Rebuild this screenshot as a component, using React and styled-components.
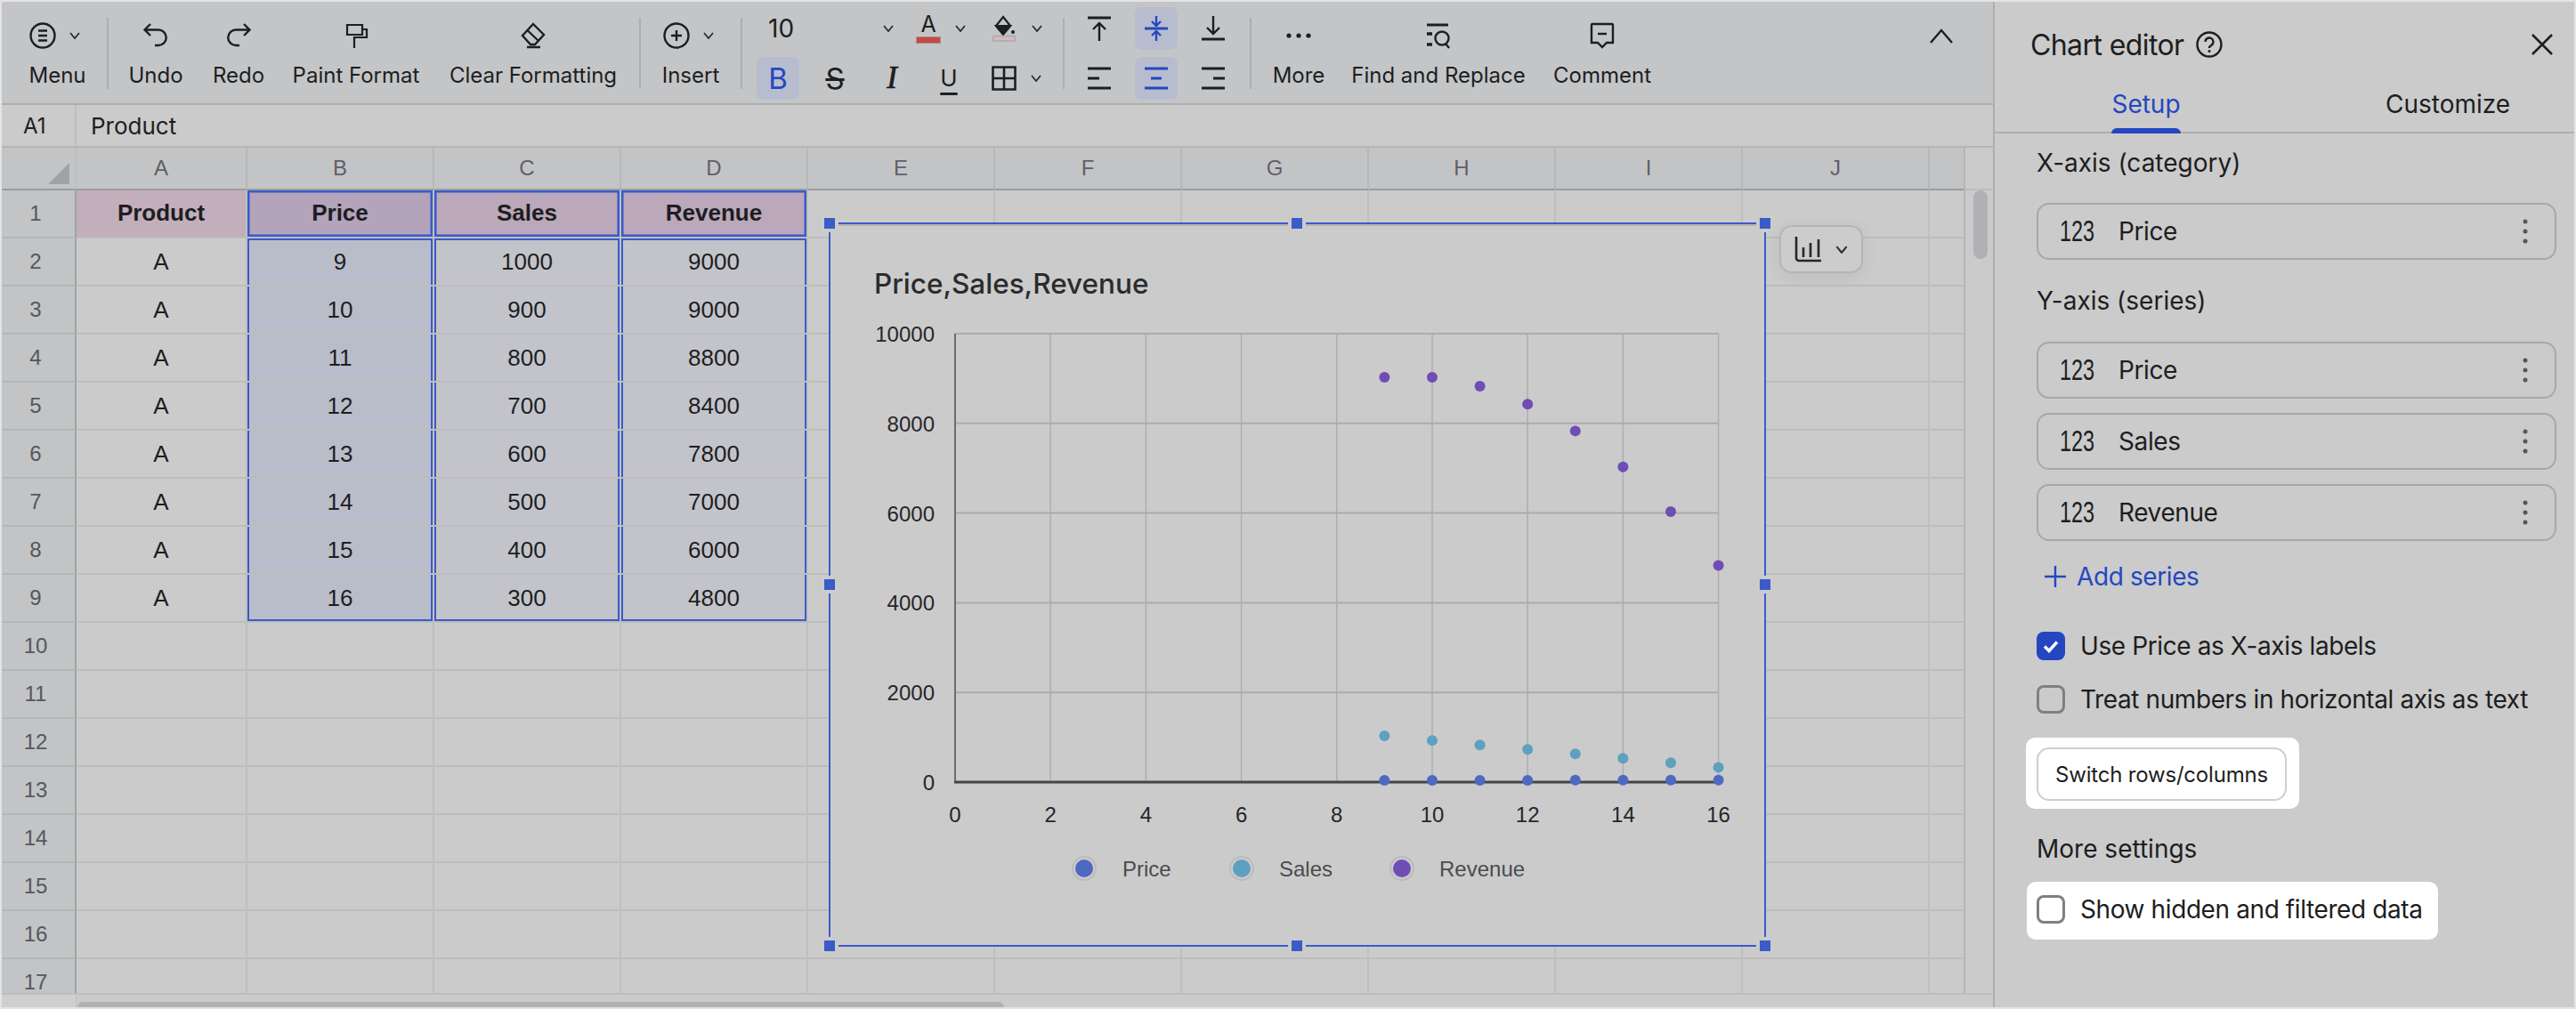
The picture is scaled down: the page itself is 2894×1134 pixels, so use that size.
import React from "react";
import styled, { createGlobalStyle } from "styled-components";

const INK = "#1d1e21";
const BLUE = "#2447c0";
const LINE = "#3a5bc8";
const SANS = `Inter, "Liberation Sans", sans-serif`;
const ARIAL = `"Liberation Sans", Arial, sans-serif`;

const GlobalStyle = createGlobalStyle`
  html, body { margin: 0; padding: 0; background: #e4e4e4; }
  * { box-sizing: border-box; }
`;

const Page = styled.div`
  width: 2894px;
  height: 1134px;
  padding: 2px;
  display: flex;
  background: #e4e4e4;
  color: ${INK};
  font-family: ${SANS};
  overflow: hidden;
`;

const Workspace = styled.div`
  width: 2237px;
  display: flex;
  flex-direction: column;
`;

/* toolbar */
const Toolbar = styled.div`
  height: 116px;
  display: flex;
  align-items: flex-start;
  background: #c4c5c7;
  border-bottom: 2px solid #adaeb0;
`;

const TallButton = styled.div`
  width: ${(p) => p.$w}px;
  padding-top: 23px;
  padding-left: ${(p) => p.$pl || 0}px;
  display: flex;
  flex-direction: column;
  align-items: center;
  gap: 15px;
  flex: none;
`;

const IconRow = styled.div`
  height: 30px;
  display: flex;
  align-items: center;
  gap: 15px;
  margin-right: ${(p) => p.$mr || 0}px;
`;

const ToolLabel = styled.span`
  font-size: 24px;
  line-height: 30px;
  white-space: nowrap;
`;

const Sep = styled.div`
  width: 2px;
  height: 80px;
  margin: 18px ${(p) => p.$mr || 0}px 0 ${(p) => p.$ml || 0}px;
  background: #adaeb0;
  flex: none;
`;

const MiniBlock = styled.div`
  width: ${(p) => p.$w}px;
  padding-top: 6px;
  display: flex;
  flex-direction: column;
  gap: 8px;
  flex: none;
`;

const MiniRow = styled.div`
  height: 48px;
  display: flex;
  align-items: center;
  gap: ${(p) => p.$gap || 0}px;
  padding-left: ${(p) => p.$pl || 0}px;
`;

const Square = styled.div`
  width: 48px;
  height: 48px;
  border-radius: 8px;
  display: flex;
  align-items: center;
  justify-content: center;
  background: ${(p) => (p.$on ? "#b7bdce" : "transparent")};
  color: ${(p) => (p.$on ? BLUE : INK)};
  flex: none;
`;

const FontSelect = styled.div`
  width: 141px;
  margin-right: 24px;
  display: flex;
  align-items: center;
  justify-content: space-between;
  font-size: 28px;
`;

const DropButton = styled.div`
  width: 57px;
  margin-left: ${(p) => p.$ml || 0}px;
  display: flex;
  align-items: center;
  gap: 15px;
  flex: none;
`;

const ColorA = styled.div`
  width: 30px;
  display: flex;
  flex-direction: column;
  align-items: center;
  font-size: 25px;
  line-height: 24px;
  &::after {
    content: "";
    width: 26px;
    height: 6px;
    margin-top: 2px;
    background: #c44b45;
    border: 1px solid #ad8b88;
  }
`;

const BoldMark = styled.span`
  font-size: 33px;
`;

const StrikeMark = styled.span`
  font-size: 33px;
  text-decoration: line-through;
  text-decoration-thickness: 2.5px;
`;

const ItalicMark = styled.span`
  font-family: "Liberation Serif", serif;
  font-size: 35px;
  font-style: italic;
  -webkit-text-stroke: 0.7px ${INK};
`;

const UnderMark = styled.span`
  font-size: 26px;
  line-height: 30px;
  text-decoration: underline;
  text-decoration-thickness: 3px;
  text-underline-offset: 7px;
`;

const CollapseCaret = styled.div`
  margin: 24px 43px 0 auto;
  height: 30px;
  display: flex;
`;

/* formula bar */
const FormulaBar = styled.div`
  height: 48px;
  display: flex;
  align-items: center;
  background: #cbcbcb;
  border-bottom: 2px solid #b5b5b6;
  font-size: 24px;
`;

const CellRef = styled.div`
  width: 84px;
  height: 100%;
  padding-left: 24px;
  display: flex;
  align-items: center;
  border-right: 2px solid #bebebe;
`;

const FormulaText = styled.div`
  padding-left: 16px;
  font-size: 26px;
`;

/* sheet */
const SheetArea = styled.div`
  position: relative;
  flex: 1;
  display: flex;
  flex-direction: column;
`;

const SheetBody = styled.div`
  height: 950px;
  display: flex;
`;

const Grid = styled.div`
  width: 2204px;
  height: 950px;
  display: grid;
  grid-template-columns: 84px 192px repeat(9, 210px) 38px;
  grid-template-rows: 48px repeat(17, 54px);
  overflow: hidden;
  font-family: ${ARIAL};
  background: #cbcbcb;
`;

const Corner = styled.div`
  position: relative;
  background: #c3c4c6;
  border-right: 2px solid #bdbec0;
  border-bottom: 2px solid #9b9c9e;
  &::after {
    content: "";
    position: absolute;
    right: 6px;
    bottom: 5px;
    border-style: solid;
    border-width: 0 0 24px 24px;
    border-color: transparent transparent #a0a3a5 transparent;
  }
`;

const ColHead = styled.div`
  display: flex;
  align-items: center;
  justify-content: center;
  background: #c3c4c6;
  color: #5f6066;
  font-size: 24px;
  border-right: ${(p) => (p.$last ? "0" : "2px solid #b7b8ba")};
  border-bottom: 2px solid #9b9c9e;
`;

const RowHead = styled.div`
  display: flex;
  align-items: center;
  justify-content: center;
  padding-right: 6px;
  background: #c3c4c6;
  color: #55575c;
  font-size: 24px;
  border-right: 2px solid #a0a2a5;
  border-bottom: 2px solid #b5b6b8;
`;

const edgeShadow = (edge, w) => {
  if (!edge) return "none";
  const sides = [`inset ${w}px 0 0 ${LINE}`, `inset -${w}px 0 0 ${LINE}`];
  if (edge === "top" || edge === "box") sides.push(`inset 0 ${w}px 0 ${LINE}`);
  if (edge === "bottom" || edge === "box") sides.push(`inset 0 -${w}px 0 ${LINE}`);
  return sides.join(",");
};

const Cell = styled.div`
  display: flex;
  align-items: center;
  justify-content: center;
  padding-bottom: ${(p) => (p.$head ? 2 : 0)}px;
  background: ${(p) => p.$bg || "#cbcbcb"};
  font-size: 26px;
  font-weight: ${(p) => (p.$head ? 700 : 400)};
  border-right: 2px solid ${(p) => (p.$last ? "transparent" : "#bfbfbf")};
  border-bottom: 2px solid #bdbdbd;
  box-shadow: ${(p) => edgeShadow(p.$edge, p.$head ? 2.5 : 2)};
`;

const VScroll = styled.div`
  width: 33px;
  height: 950px;
  padding: 46px 7px 0 9px;
  background: #cbcbcb;
  border-left: 2px solid #b5b5b6;
  &::before {
    content: "";
    display: block;
    height: 2px;
    margin: 0 -7px 0 -9px;
    background: #bdbdbd;
  }
`;

const VThumb = styled.div`
  width: 16px;
  height: 77px;
  border-radius: 8px;
  background: #b0b1b4;
`;

const HScroll = styled.div`
  height: 16px;
  display: flex;
  background: #cbcbcb;
  border-top: 2px solid #bdbdbd;
`;

const HStub = styled.div`
  width: 84px;
  background: #cfcfcf;
  border-right: 1px solid #bdbdbd;
`;

const HThumb = styled.div`
  width: 1041px;
  height: 6px;
  margin: 8px 0 0 1px;
  border-radius: 8px 8px 0 0;
  background: #b0b1b4;
`;

/* chart object */
const ChartFrame = styled.div`
  position: absolute;
  left: 931px;
  top: 86px;
  width: 1049px;
  height: 810px;
  background: #cbcbcb;
  box-shadow: 0 0 0 2px ${LINE}, inset 0 2px 0 #b5b5b5;
`;

const handleX = { l: "-7px", c: "calc(50% - 7px)", r: "calc(100% - 5px)" };
const handleY = { t: "-7px", m: "calc(50% - 6px)", b: "calc(100% - 5px)" };

const Handle = styled.div`
  position: absolute;
  left: ${(p) => handleX[p.$x]};
  top: ${(p) => handleY[p.$y]};
  width: 12px;
  height: 12px;
  background: ${LINE};
  box-shadow: 0 0 0 4px #cbcbcb;
`;

const ChartSvg = styled.svg`
  display: block;
  width: 100%;
  height: 100%;
`;

const ChartTypeButton = styled.div`
  position: absolute;
  left: 1997px;
  top: 87px;
  width: 94px;
  height: 54px;
  display: flex;
  align-items: center;
  justify-content: center;
  gap: 16px;
  background: #cccccc;
  border: 2px solid #b5b5b7;
  border-radius: 14px;
  box-shadow: 0 4px 20px rgba(0, 0, 0, 0.07);
`;

/* chart editor panel */
const Panel = styled.aside`
  flex: 1;
  display: flex;
  flex-direction: column;
  background: #cbcbcb;
  border-left: 2px solid #adaeb0;
`;

const PanelHeader = styled.div`
  height: 96px;
  padding: 0 24px 0 40px;
  display: flex;
  align-items: center;
  gap: 14px;
`;

const PanelTitle = styled.div`
  font-size: 32px;
  letter-spacing: -0.6px;
`;

const CloseButton = styled.div`
  margin-left: auto;
  display: flex;
`;

const Tabs = styled.div`
  height: 52px;
  display: flex;
  border-bottom: 2px solid #adaeb0;
`;

const Tab = styled.div`
  position: relative;
  margin: ${(p) => p.$margin};
  width: ${(p) => p.$w}px;
  text-align: center;
  font-size: 28px;
  line-height: 38px;
  color: ${(p) => (p.$active ? BLUE : INK)};
  ${(p) =>
    p.$active &&
    `&::after {
      content: "";
      position: absolute;
      left: 0;
      right: 0;
      bottom: -2px;
      height: 6px;
      border-radius: 6px 6px 0 0;
      background: ${BLUE};
    }`}
`;

const PanelBody = styled.div`
  padding: 15px 20px 0 47px;
  display: flex;
  flex-direction: column;
`;

const SectionLabel = styled.div`
  height: 36px;
  margin-top: ${(p) => p.$mt || 0}px;
  font-size: 28px;
  line-height: 36px;
`;

const FieldList = styled.div`
  margin-top: ${(p) => p.$mt || 28}px;
  display: flex;
  flex-direction: column;
  gap: 16px;
`;

const Field = styled.div`
  height: 64px;
  padding: 0 30px 0 24px;
  display: flex;
  align-items: center;
  border: 2px solid #a8a8a8;
  border-radius: 14px;
  font-size: 28px;
  letter-spacing: -0.4px;
`;

const TypeMark = styled.span`
  width: 44px;
  margin-right: 22px;
  font-family: ${ARIAL};
  font-size: 33px;
  line-height: 36px;
  letter-spacing: 0;
  transform: scaleX(0.71);
  transform-origin: left center;
  white-space: nowrap;
`;

const FieldDots = styled.span`
  margin-left: auto;
  display: flex;
`;

const AddSeries = styled.div`
  height: 36px;
  margin-top: 22px;
  padding-left: 9px;
  display: flex;
  align-items: center;
  gap: 12px;
  color: ${BLUE};
  font-size: 28px;
  letter-spacing: -0.4px;
`;

const CheckRow = styled.div`
  height: 32px;
  margin-top: ${(p) => p.$mt || 0}px;
  display: flex;
  align-items: center;
  gap: 17px;
  font-size: 28px;
  letter-spacing: -0.4px;
  white-space: nowrap;
`;

const CheckBox = styled.div`
  width: 32px;
  height: 32px;
  border-radius: 8px;
  display: flex;
  align-items: center;
  justify-content: center;
  background: ${(p) => (p.$checked ? BLUE : p.$white ? "#fff" : "transparent")};
  border: ${(p) => (p.$checked ? "0" : "3px solid #7d8086")};
  flex: none;
`;

const Spotlight = styled.div`
  align-self: flex-start;
  margin: ${(p) => p.$margin};
  padding: ${(p) => p.$padding};
  background: #fff;
  border-radius: 10px;
`;

const SwitchButton = styled.div`
  width: 281px;
  height: 60px;
  display: flex;
  align-items: center;
  justify-content: center;
  background: #fff;
  border: 2px solid #cfcfd2;
  border-radius: 14px;
  font-size: 24px;
  letter-spacing: -0.2px;
`;

/* icons */
const Chevron = ({ color = "#2a2b2e", w = 12, h = 8 }) => (
  <svg width={w} height={h} viewBox="0 0 12 8" fill="none" stroke={color} strokeWidth="1.8">
    <path d="M1 1l5 6 5-6" />
  </svg>
);

const Icon = ({ children, size = 30, color = "currentColor", sw = 2.4 }) => (
  <svg width={size} height={size} viewBox="0 0 30 30" fill="none" stroke={color} strokeWidth={sw}>
    {children}
  </svg>
);

const MenuIcon = () => (
  <Icon>
    <circle cx="15" cy="15" r="13.5" />
    <path d="M10 9.5h10M10 15h10M10 20.5h10" />
  </Icon>
);
const UndoIcon = () => (
  <Icon>
    <path d="M9 2 2.500 8.500 9 15M3 8.500h15a8.750 8.750 0 0 1 0 17.500h-4" />
  </Icon>
);
const RedoIcon = () => (
  <Icon>
    <path d="M21 2l6.500 6.500L21 15M27 8.500H12a8.750 8.750 0 0 0 0 17.500h4" />
  </Icon>
);
const PaintIcon = () => (
  <Icon sw={2.2}>
    <path d="M5 3h17v11H5zM22 8h5v9H13v12" />
  </Icon>
);
const EraserIcon = () => (
  <Icon>
    <path d="M15 2 27 14 17 25h-5L3 15zM8.500 9 21 21M8 28h15" />
  </Icon>
);
const PlusCircleIcon = () => (
  <Icon>
    <circle cx="15" cy="15" r="13.5" />
    <path d="M15 9v12M9 15h12" />
  </Icon>
);
const FillIcon = () => (
  <Icon sw={2.2}>
    <path d="M13 2l8 10-8 9.500L5 12z" />
    <path d="M5 12h16l-8 9.500z" fill="currentColor" />
    <circle cx="24" cy="19" r="2" fill="currentColor" stroke="none" />
    <rect x="2" y="23.500" width="24" height="5.500" fill="#d7b8c4" stroke="#a9a9a9" strokeWidth="1.500" />
  </Icon>
);
const BorderIcon = () => (
  <Icon sw={2.6}>
    <path d="M2.500 2.500h25v25h-25zM15 2.500v25M2.500 15h25" />
  </Icon>
);
const AlignTopIcon = () => (
  <Icon>
    <path d="M2 3h26" strokeWidth="3" />
    <path d="M15 29V9M8 16l7-7 7 7" />
  </Icon>
);
const AlignMiddleIcon = () => (
  <Icon>
    <path d="M2 15h26" strokeWidth="3" />
    <path d="M15 1v10M10 7l5 5 5-5M15 29V19M10 23l5-5 5 5" />
  </Icon>
);
const AlignBottomIcon = () => (
  <Icon>
    <path d="M2 27h26" strokeWidth="3" />
    <path d="M15 1v20M8 14l7 7 7-7" />
  </Icon>
);
const HAlignIcon = ({ mid }) => (
  <Icon sw={3}>
    <path d="M2 4h26M2 26h26" />
    <path d={mid} />
  </Icon>
);
const DotsIcon = () => (
  <Icon>
    <circle cx="4" cy="15" r="2.600" fill="currentColor" stroke="none" />
    <circle cx="15" cy="15" r="2.600" fill="currentColor" stroke="none" />
    <circle cx="26" cy="15" r="2.600" fill="currentColor" stroke="none" />
  </Icon>
);
const FindIcon = () => (
  <Icon>
    <path d="M2 3h24" strokeWidth="3" />
    <path d="M2 13h6M2 25h6" strokeWidth="3.500" />
    <circle cx="19" cy="18" r="7.500" />
    <path d="M23 24l4 5" />
  </Icon>
);
const CommentIcon = () => (
  <Icon>
    <path d="M4 2h22a1 1 0 0 1 1 1v20H20l-5 5-5-5H3V3a1 1 0 0 1 1-1z" />
    <path d="M10 13h10" />
  </Icon>
);
const CaretUpIcon = () => (
  <Icon sw={2.400}>
    <path d="M3 22 15 8l12 14" />
  </Icon>
);
const BarsIcon = () => (
  <Icon size={30} sw={2.600} color="#25272b">
    <path d="M2 1v24a3 3 0 0 0 3 3h25" />
    <path d="M10 13v11M18 8v16M27 4v20" />
  </Icon>
);
const HelpIcon = () => (
  <svg width="30" height="30" viewBox="0 0 30 30" fill="none" stroke={INK} strokeWidth="2.400">
    <circle cx="15" cy="15" r="13.500" />
    <path d="M10.500 12a4.500 4.500 0 1 1 7 3.700c-1.500 1-2.500 1.600-2.500 3.300" />
    <circle cx="15" cy="22.500" r="1.500" fill={INK} stroke="none" />
  </svg>
);
const CloseIcon = () => (
  <svg width="24" height="24" viewBox="0 0 24 24" fill="none" stroke={INK} strokeWidth="2.500">
    <path d="M1 1l22 22M23 1 1 23" />
  </svg>
);
const KebabIcon = () => (
  <svg width="6" height="28" viewBox="0 0 6 28" fill="#55575c">
    <circle cx="3" cy="3" r="2.500" />
    <circle cx="3" cy="14" r="2.500" />
    <circle cx="3" cy="25" r="2.500" />
  </svg>
);
const PlusIcon = () => (
  <svg width="24" height="24" viewBox="0 0 24 24" fill="none" stroke={BLUE} strokeWidth="2.400">
    <path d="M12 0v24M0 12h24" />
  </svg>
);
const CheckIcon = () => (
  <svg width="20" height="20" viewBox="0 0 20 20" fill="none" stroke="#fff" strokeWidth="3.400">
    <path d="M3 10.500l5 5 9-10" />
  </svg>
);

/* data */
const COLS = ["A", "B", "C", "D", "E", "F", "G", "H", "I", "J"];
const TABLE = [
  ["A", 9, 1000, 9000],
  ["A", 10, 900, 9000],
  ["A", 11, 800, 8800],
  ["A", 12, 700, 8400],
  ["A", 13, 600, 7800],
  ["A", 14, 500, 7000],
  ["A", 15, 400, 6000],
  ["A", 16, 300, 4800],
];
const HEADS = ["Product", "Price", "Sales", "Revenue"];
const HEAD_BG = ["#c3aebb", "#b3a3bb", "#bba8ba", "#bba8ba"];
const BODY_BG = [null, "#b8bdc9", "#c3c4ca", "#c3c4ca"];

const X0 = 1073;
const XU = 53.6;
const Y0 = 879;
const YU = 0.0504;
const PX = (v) => X0 + v * XU;
const PY = (v) => Y0 - 1.5 - v * YU;

const SERIES = [
  { name: "Price", color: "#4f69c2", dot: 1218, text: 1261, idx: 1 },
  { name: "Sales", color: "#5ea0c0", dot: 1395, text: 1437, idx: 2 },
  { name: "Revenue", color: "#6f4db5", dot: 1575, text: 1617, idx: 3 },
];

const ChartDrawing = () => (
  <ChartSvg viewBox="933 252 1049 810">
    <text x="982" y="330" fontFamily={SANS} fontSize="31.500" fontWeight="500" fill="#2a2b2e">
      Price,Sales,Revenue
    </text>
    {[2, 4, 6, 8, 10, 12, 14, 16].map((v) => (
      <line key={v} x1={PX(v)} x2={PX(v)} y1="375" y2={Y0} stroke="#aeaeae" strokeWidth="1.500" />
    ))}
    {[2000, 4000, 6000, 8000, 10000].map((v) => (
      <line key={v} x1={X0} x2={PX(16)} y1={Y0 - v * YU} y2={Y0 - v * YU} stroke="#ababab" strokeWidth="2" />
    ))}
    <line x1={X0} x2={X0} y1="375" y2={Y0} stroke="#6e6e70" strokeWidth="2" />
    <line x1={X0 - 1} x2={PX(16)} y1={Y0} y2={Y0} stroke="#444548" strokeWidth="3" />
    {[0, 2000, 4000, 6000, 8000, 10000].map((v) => (
      <text key={v} x="1050" y={Y0 - v * YU + 9} textAnchor="end" fontFamily={ARIAL} fontSize="24" fill="#25262a">
        {v}
      </text>
    ))}
    {[0, 2, 4, 6, 8, 10, 12, 14, 16].map((v) => (
      <text key={v} x={PX(v)} y="924" textAnchor="middle" fontFamily={ARIAL} fontSize="24" fill="#25262a">
        {v}
      </text>
    ))}
    {SERIES.map((s) =>
      TABLE.map((row) => (
        <circle key={s.name + row[1]} cx={PX(row[1])} cy={PY(row[s.idx])} r="6" fill={s.color} />
      ))
    )}
    {SERIES.map((s) => (
      <g key={s.name}>
        <circle cx={s.dot} cy="976" r="14" fill="#bcbcbe" />
        <circle cx={s.dot} cy="976" r="12" fill="#cbcbcb" />
        <circle cx={s.dot} cy="976" r="10" fill={s.color} />
        <text x={s.text} y="985" fontFamily={ARIAL} fontSize="24" fill="#4a4b4f">
          {s.name}
        </text>
      </g>
    ))}
  </ChartSvg>
);

const FieldRow = ({ name }) => (
  <Field>
    <TypeMark>123</TypeMark>
    {name}
    <FieldDots>
      <KebabIcon />
    </FieldDots>
  </Field>
);

const SheetGrid = () => (
  <Grid>
    <Corner />
    {COLS.map((c) => (
      <ColHead key={c}>{c}</ColHead>
    ))}
    <ColHead $last />
    {Array.from({ length: 17 }, (_, r) => (
      <React.Fragment key={r}>
        <RowHead>{r + 1}</RowHead>
        {Array.from({ length: 11 }, (_, c) => {
          if (r === 0 && c < 4) {
            return (
              <Cell key={c} $head $bg={HEAD_BG[c]} $edge={c > 0 ? "box" : null}>
                {HEADS[c]}
              </Cell>
            );
          }
          if (r >= 1 && r <= 8 && c < 4) {
            const edge = c === 0 ? null : r === 1 ? "top" : r === 8 ? "bottom" : "mid";
            return (
              <Cell key={c} $bg={BODY_BG[c]} $edge={edge}>
                {TABLE[r - 1][c]}
              </Cell>
            );
          }
          return <Cell key={c} $last={c === 10} />;
        })}
      </React.Fragment>
    ))}
  </Grid>
);

export default function App() {
  return (
    <Page>
      <GlobalStyle />
      <Workspace>
        <Toolbar>
          <TallButton $w={118} $pl={7}>
            <IconRow $mr={6}>
              <MenuIcon />
              <Chevron />
            </IconRow>
            <ToolLabel>Menu</ToolLabel>
          </TallButton>
          <Sep />
          <TallButton $w={106}>
            <IconRow>
              <UndoIcon />
            </IconRow>
            <ToolLabel>Undo</ToolLabel>
          </TallButton>
          <TallButton $w={80}>
            <IconRow>
              <RedoIcon />
            </IconRow>
            <ToolLabel>Redo</ToolLabel>
          </TallButton>
          <TallButton $w={184}>
            <IconRow>
              <PaintIcon />
            </IconRow>
            <ToolLabel>Paint Format</ToolLabel>
          </TallButton>
          <TallButton $w={214}>
            <IconRow>
              <EraserIcon />
            </IconRow>
            <ToolLabel>Clear Formatting</ToolLabel>
          </TallButton>
          <Sep $ml={12} />
          <TallButton $w={112}>
            <IconRow $mr={6}>
              <PlusCircleIcon />
              <Chevron />
            </IconRow>
            <ToolLabel>Insert</ToolLabel>
          </TallButton>
          <Sep />
          <MiniBlock $w={360}>
            <MiniRow $pl={29}>
              <FontSelect>
                10
                <Chevron />
              </FontSelect>
              <DropButton>
                <ColorA>A</ColorA>
                <Chevron />
              </DropButton>
              <DropButton $ml={29}>
                <FillIcon />
                <Chevron />
              </DropButton>
            </MiniRow>
            <MiniRow $pl={16} $gap={16}>
              <Square $on>
                <BoldMark>B</BoldMark>
              </Square>
              <Square>
                <StrikeMark>S</StrikeMark>
              </Square>
              <Square>
                <ItalicMark>I</ItalicMark>
              </Square>
              <Square>
                <UnderMark>U</UnderMark>
              </Square>
              <DropButton $ml={7}>
                <BorderIcon />
                <Chevron />
              </DropButton>
            </MiniRow>
          </MiniBlock>
          <Sep />
          <MiniBlock $w={208}>
            <MiniRow $pl={15} $gap={16}>
              <Square>
                <AlignTopIcon />
              </Square>
              <Square $on>
                <AlignMiddleIcon />
              </Square>
              <Square>
                <AlignBottomIcon />
              </Square>
            </MiniRow>
            <MiniRow $pl={15} $gap={16}>
              <Square>
                <HAlignIcon mid="M2 15h13" />
              </Square>
              <Square $on>
                <HAlignIcon mid="M9 15h12" />
              </Square>
              <Square>
                <HAlignIcon mid="M15 15h13" />
              </Square>
            </MiniRow>
          </MiniBlock>
          <Sep />
          <TallButton $w={106}>
            <IconRow>
              <DotsIcon />
            </IconRow>
            <ToolLabel>More</ToolLabel>
          </TallButton>
          <TallButton $w={208}>
            <IconRow>
              <FindIcon />
            </IconRow>
            <ToolLabel>Find and Replace</ToolLabel>
          </TallButton>
          <TallButton $w={160}>
            <IconRow>
              <CommentIcon />
            </IconRow>
            <ToolLabel>Comment</ToolLabel>
          </TallButton>
          <CollapseCaret>
            <CaretUpIcon />
          </CollapseCaret>
        </Toolbar>

        <FormulaBar>
          <CellRef>A1</CellRef>
          <FormulaText>Product</FormulaText>
        </FormulaBar>

        <SheetArea>
          <SheetBody>
            <SheetGrid />
            <VScroll>
              <VThumb />
            </VScroll>
          </SheetBody>
          <HScroll>
            <HStub />
            <HThumb />
          </HScroll>

          <ChartFrame>
            <ChartDrawing />
            <Handle $x="l" $y="t" />
            <Handle $x="c" $y="t" />
            <Handle $x="r" $y="t" />
            <Handle $x="l" $y="m" />
            <Handle $x="r" $y="m" />
            <Handle $x="l" $y="b" />
            <Handle $x="c" $y="b" />
            <Handle $x="r" $y="b" />
          </ChartFrame>
          <ChartTypeButton>
            <BarsIcon />
            <Chevron w={14} h={9} />
          </ChartTypeButton>
        </SheetArea>
      </Workspace>

      <Panel>
        <PanelHeader>
          <PanelTitle>Chart editor</PanelTitle>
          <HelpIcon />
          <CloseButton>
            <CloseIcon />
          </CloseButton>
        </PanelHeader>
        <Tabs>
          <Tab $active $w={78} $margin="0 0 0 131px">
            Setup
          </Tab>
          <Tab $w={140} $margin="0 72px 0 auto">
            Customize
          </Tab>
        </Tabs>
        <PanelBody>
          <SectionLabel>X-axis (category)</SectionLabel>
          <FieldList $mt={27}>
            <FieldRow name="Price" />
          </FieldList>
          <SectionLabel $mt={28}>Y-axis (series)</SectionLabel>
          <FieldList>
            <FieldRow name="Price" />
            <FieldRow name="Sales" />
            <FieldRow name="Revenue" />
          </FieldList>
          <AddSeries>
            <PlusIcon />
            Add series
          </AddSeries>
          <CheckRow $mt={44}>
            <CheckBox $checked>
              <CheckIcon />
            </CheckBox>
            Use Price as X-axis labels
          </CheckRow>
          <CheckRow $mt={28}>
            <CheckBox />
            Treat numbers in horizontal axis as text
          </CheckRow>
          <Spotlight $margin="27px 0 0 -12px" $padding="11px 14px 9px 12px">
            <SwitchButton>Switch rows/columns</SwitchButton>
          </Spotlight>
          <SectionLabel $mt={27}>More settings</SectionLabel>
          <Spotlight $margin="19px 0 0 -11px" $padding="15px 17px 18px 11px">
            <CheckRow>
              <CheckBox $white />
              Show hidden and filtered data
            </CheckRow>
          </Spotlight>
        </PanelBody>
      </Panel>
    </Page>
  );
}
